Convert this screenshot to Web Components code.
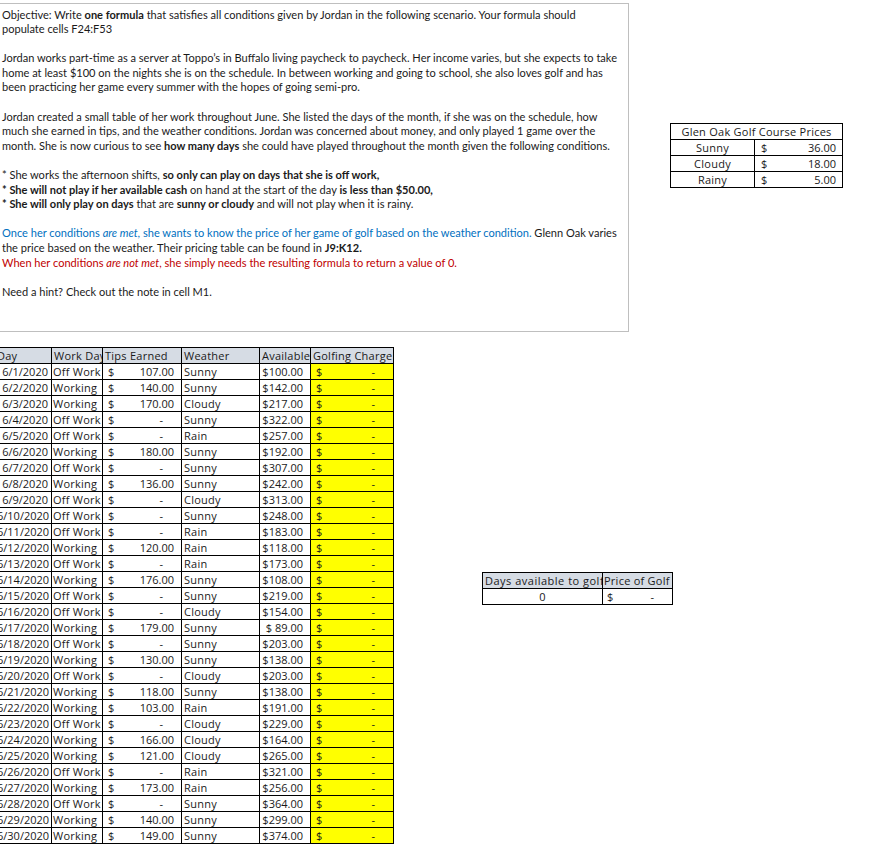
<!DOCTYPE html>
<html>
<head>
<meta charset="utf-8">
<title>Golf formula worksheet</title>
<style>
    html, body { margin: 0; background: #fff; }
    body { width: 870px; height: 846px; overflow: hidden; }
    .top, .bottom { display: flex; align-items: flex-start; }
    price-table { margin: 123px 0 0 41px; }
    summary-table { margin: 240px 0 0 88px; }
</style>
</head>
<body>
<div class="top">
    <note-box></note-box>
    <price-table></price-table>
</div>
<div class="bottom">
    <work-table></work-table>
    <summary-table></summary-table>
</div>
<script>
const cellStyles = `
    table { border-collapse: collapse; table-layout: fixed; background: #fff; }
    td {
        border: 1px solid #000;
        height: 15px;
        padding: 0 2px;
        box-sizing: content-box;
        overflow: hidden;
        white-space: nowrap;
        font: 11px/15px "Open Sans", sans-serif;
        letter-spacing: 0.25px;
        color: #1a1a1a;
    }
    .head { background: #d6dce4; }
    .right { text-align: right; }
    .center { text-align: center; }
    .money { display: flex; justify-content: space-between; padding: 0 7px 0 6px; letter-spacing: 0; }
    .money.zero { padding-right: 18px; }
    .yellow { background: #ffff00; }
`;

const money = (value) => {
    const zero = !value;
    return `<div class="money${zero ? ' zero' : ''}"><span>$</span><span>${zero ? '-' : value.toFixed(2)}</span></div>`;
};

class NoteBox extends HTMLElement {
    constructor() {
        super();
        this.attachShadow({ mode: 'open' });
    }

    connectedCallback() {
        this.shadowRoot.innerHTML = `
            <style>
                :host {
                    display: block;
                    flex: none;
                    box-sizing: border-box;
                    width: 630px;
                    height: 329px;
                    margin: 3px 0 0 -1px;
                    padding: 3.5px 0 0 2px;
                    border: 1px solid #bfbfbf;
                    font: 11.05px/14.6px Lato, sans-serif;
                    color: #1a1a1a;
                }
                p { margin: 0 0 14.6px; white-space: nowrap; }
                .blue { color: #0070c0; }
                .red { color: #c00000; }
            </style>
            <p>Objective: Write <b>one formula</b> that satisfies all conditions given by Jordan in the following scenario. Your formula should<br>populate cells F24:F53</p>
            <p>Jordan works part-time as a server at Toppo’s in Buffalo living paycheck to paycheck. Her income varies, but she expects to take<br>home at least $100 on the nights she is on the schedule. In between working and going to school, she also loves golf and has<br>been practicing her game every summer with the hopes of going semi-pro.</p>
            <p>Jordan created a small table of her work throughout June. She listed the days of the month, if she was on the schedule, how<br>much she earned in tips, and the weather conditions. Jordan was concerned about money, and only played 1 game over the<br>month. She is now curious to see <b>how many days</b> she could have played throughout the month given the following conditions.</p>
            <p>* She works the afternoon shifts, <b>so only can play on days that she is off work,</b><br><b>* She will not play if her available cash</b> on hand at the start of the day <b>is less than $50.00,</b><br><b>* She will only play on days</b> that are <b>sunny or cloudy</b> and will not play when it is rainy.</p>
            <p><span class="blue">Once her conditions <i>are met</i>, she wants to know the price of her game of golf based on the weather condition.</span> Glenn Oak varies<br>the price based on the weather. Their pricing table can be found in <b>J9:K12.</b><br><span class="red">When her conditions <i>are not met</i>, she simply needs the resulting formula to return a value of 0.</span></p>
            <p>Need a hint? Check out the note in cell M1.</p>
        `;
    }
}

class PriceTable extends HTMLElement {
    constructor() {
        super();
        this.attachShadow({ mode: 'open' });
    }

    connectedCallback() {
        const prices = [['Sunny', 36], ['Cloudy', 18], ['Rainy', 5]];
        this.shadowRoot.innerHTML = `
            <style>
                :host { display: block; flex: none; }
                ${cellStyles}
                table { width: 172px; }
                .money { padding-right: 6px; }
            </style>
            <table>
                <colgroup><col style="width:84px"><col style="width:88px"></colgroup>
                <tr><td colspan="2" class="center">Glen Oak Golf Course Prices</td></tr>
                ${prices.map(([name, price]) => `<tr><td class="center">${name}</td><td style="padding:0">${money(price)}</td></tr>`).join('')}
            </table>
        `;
    }
}

class SummaryTable extends HTMLElement {
    constructor() {
        super();
        this.attachShadow({ mode: 'open' });
    }

    connectedCallback() {
        this.shadowRoot.innerHTML = `
            <style>
                :host { display: block; flex: none; }
                ${cellStyles}
                table { width: 190px; }
                .money { padding-left: 4px; }
            </style>
            <table>
                <colgroup><col style="width:120px"><col style="width:70px"></colgroup>
                <tr><td class="head" style="letter-spacing:.5px">Days available to golf</td><td class="head" style="padding-left:1px">Price of Golf</td></tr>
                <tr><td class="center">0</td><td style="padding:0">${money(0)}</td></tr>
            </table>
        `;
    }
}

class WorkTable extends HTMLElement {
    constructor() {
        super();
        this.attachShadow({ mode: 'open' });
    }

    connectedCallback() {
        // day of June: [on schedule, tips, weather, available cash]
        const days = [
            [0, 107, 'Sunny', 100], [1, 140, 'Sunny', 142], [1, 170, 'Cloudy', 217], [0, 0, 'Sunny', 322],
            [0, 0, 'Rain', 257], [1, 180, 'Sunny', 192], [0, 0, 'Sunny', 307], [1, 136, 'Sunny', 242],
            [0, 0, 'Cloudy', 313], [0, 0, 'Sunny', 248], [0, 0, 'Rain', 183], [1, 120, 'Rain', 118],
            [0, 0, 'Rain', 173], [1, 176, 'Sunny', 108], [0, 0, 'Sunny', 219], [0, 0, 'Cloudy', 154],
            [1, 179, 'Sunny', 89], [0, 0, 'Sunny', 203], [1, 130, 'Sunny', 138], [0, 0, 'Cloudy', 203],
            [1, 118, 'Sunny', 138], [1, 103, 'Rain', 191], [0, 0, 'Cloudy', 229], [1, 166, 'Cloudy', 164],
            [1, 121, 'Cloudy', 265], [0, 0, 'Rain', 321], [1, 173, 'Rain', 256], [0, 0, 'Sunny', 364],
            [1, 140, 'Sunny', 299], [1, 149, 'Sunny', 374]
        ];
        const rows = days.map(([work, tips, weather, cash], index) => `
            <tr>
                <td class="date">6/${index + 1}/2020</td>
                <td class="status">${work ? 'Working' : 'Off Work'}</td>
                <td style="padding:0">${money(tips)}</td>
                <td>${weather}</td>
                <td class="right cash">${cash < 100 ? '$&nbsp;' : '$'}${cash.toFixed(2)}</td>
                <td class="yellow" style="padding:0">${money(0)}</td>
            </tr>`).join('');
        this.shadowRoot.innerHTML = `
            <style>
                :host { display: block; flex: none; margin: 15px 0 0 -6px; }
                ${cellStyles}
                table { width: 399px; }
                td { padding: 0 1px 0 2px; }
                .date { direction: rtl; text-align: right; padding-right: 3px; unicode-bidi: plaintext; letter-spacing: 0; }
                .status { padding-left: 1px; }
                .cash { padding-right: 7px; letter-spacing: 0; }
                .money { padding-left: 5px; }
            </style>
            <table>
                <colgroup>
                    <col style="width:57px"><col style="width:51px"><col style="width:79px">
                    <col style="width:78px"><col style="width:51px"><col style="width:83px">
                </colgroup>
                <tr class="head">
                    <td class="head">Day</td><td class="head">Work Day</td><td class="head">Tips Earned</td>
                    <td class="head">Weather</td><td class="head">Available</td><td class="head">Golfing Charge</td>
                </tr>
                ${rows}
            </table>
        `;
    }
}

customElements.define('note-box', NoteBox);
customElements.define('price-table', PriceTable);
customElements.define('summary-table', SummaryTable);
customElements.define('work-table', WorkTable);
</script>
</body>
</html>
